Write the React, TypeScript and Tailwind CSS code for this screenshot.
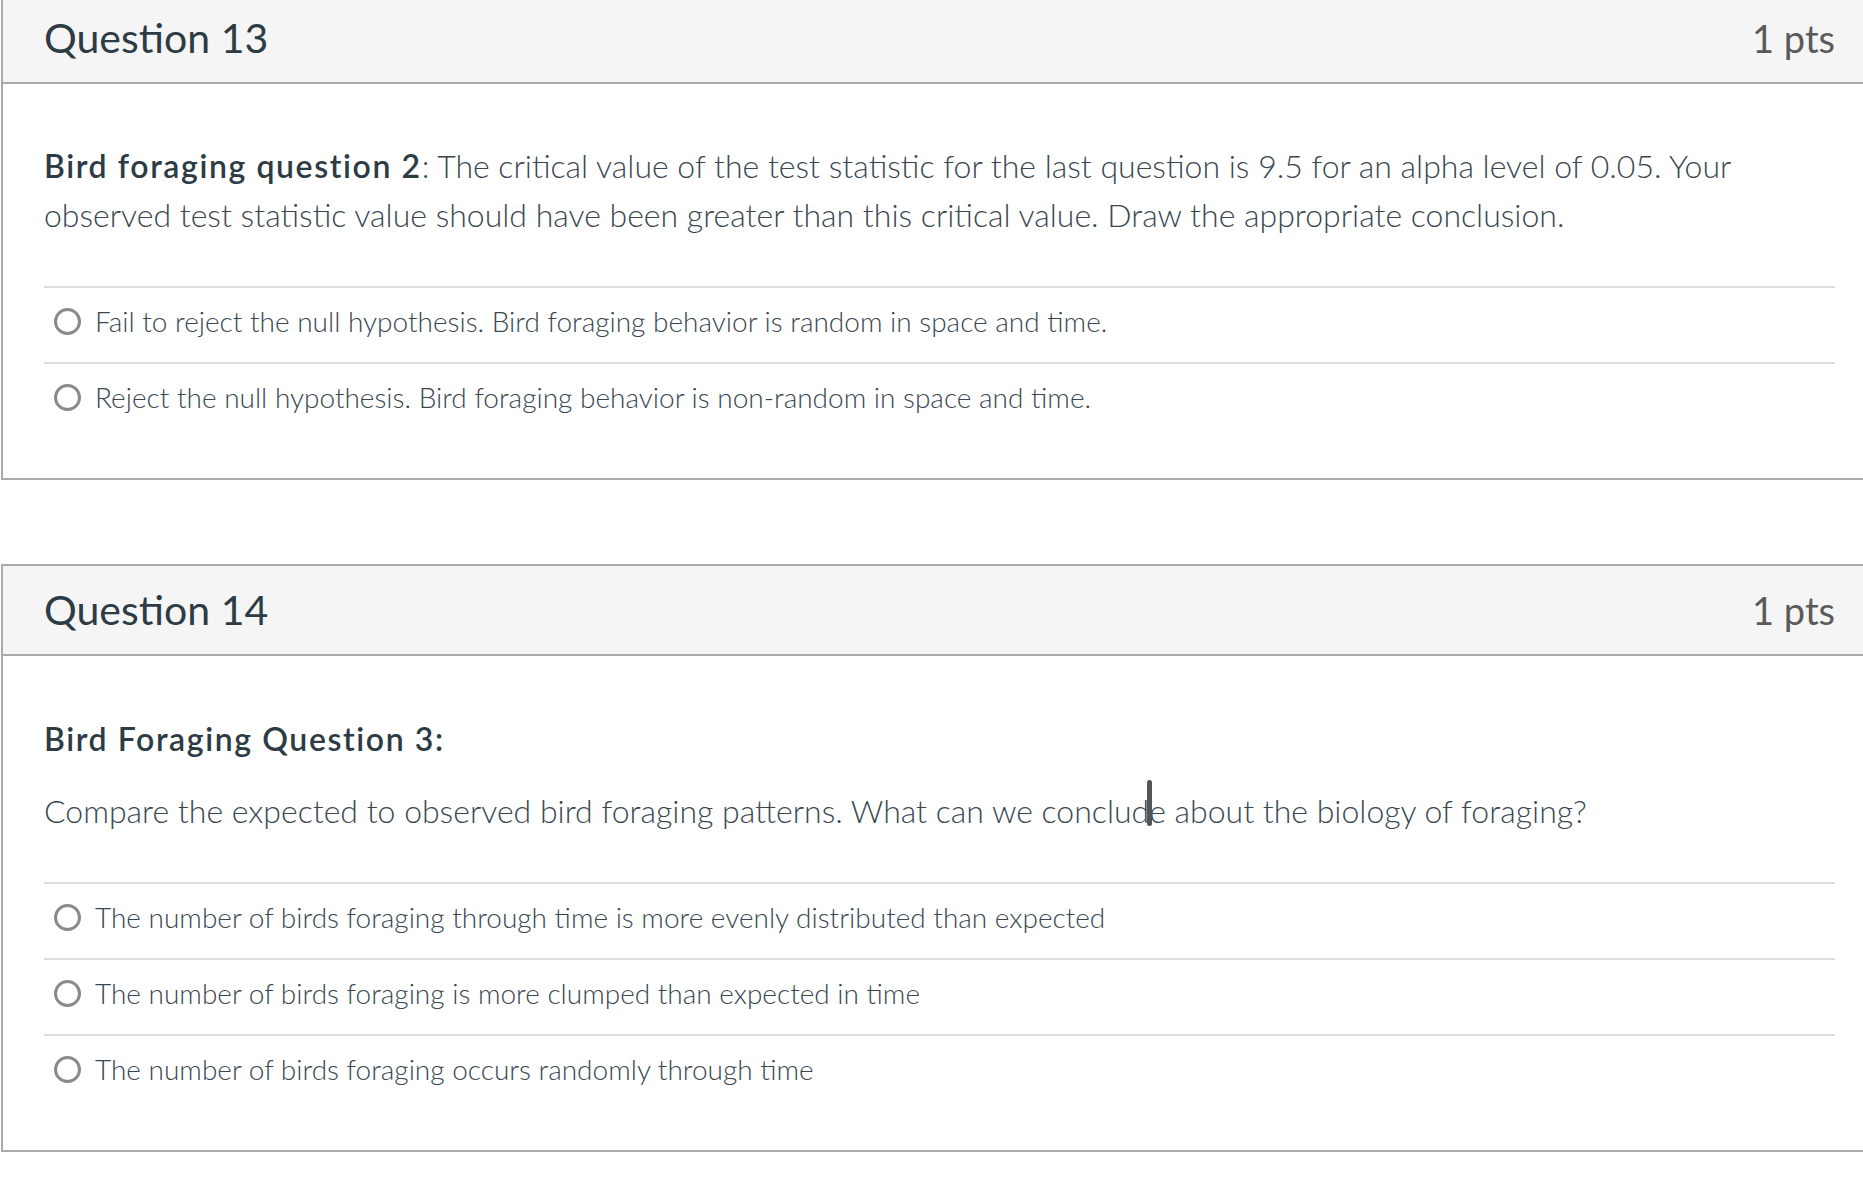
import React from "react";

type Answer = { id: string; text: string };

function Radio() {
  return <span className="ml-[10px] mr-[14px] inline-block h-[27px] w-[27px] shrink-0 rounded-full border-[3px] border-[#8a8a8a] bg-white" />;
}

function AnswerList({ answers }: { answers: Answer[] }) {
  return (
    <div className="mt-[47px]">
      {answers.map((a) => (
        <label key={a.id} className="flex h-[76px] items-center border-t-2 border-[#dddddd] pb-[8px]">
          <Radio />
          <span className="text-[28px] font-light text-[#3a4751]">{a.text}</span>
        </label>
      ))}
    </div>
  );
}

function QuestionCard({
  title,
  points,
  children,
  className = "",
}: {
  title: string;
  points: string;
  children: React.ReactNode;
  className?: string;
}) {
  return (
    <div className={`ml-px w-[1880px] border-2 border-[#aaaaaa] bg-white ${className}`}>
      <div className="flex h-[90px] items-center justify-between border-b-2 border-[#aaaaaa] bg-[#f5f5f5] pl-[41px] pr-[44px]">
        <h2 className="text-[41px] text-[#2d3b45]">{title}</h2>
        <span className="text-[38px] text-[#5a5a5a]">{points}</span>
      </div>
      <div className="pl-[41px] pr-[44px] pb-[40px]">{children}</div>
    </div>
  );
}

export default function App() {
  return (
    <div
      className="relative h-[1185px] w-full overflow-hidden bg-white"
      style={{ fontFamily: "Lato, 'Lato Extended', 'Open Sans', sans-serif" }}
    >
      <div className="-mt-[8px]">
        <QuestionCard title="Question 13" points="1 pts">
          <p className="pt-[57px] text-[32px] font-light leading-[49px] text-[#3a4751]">
            <strong className="font-semibold tracking-[0.05em] text-[#2d3b45]">Bird foraging question 2</strong>: The critical
            value of the test statistic for the last question is 9.5 for an alpha level of 0.05. Your observed test statistic
            value should have been greater than this critical value. Draw the appropriate conclusion.
          </p>
          <AnswerList
            answers={[
              { id: "a1", text: "Fail to reject the null hypothesis. Bird foraging behavior is random in space and time." },
              { id: "a2", text: "Reject the null hypothesis. Bird foraging behavior is non-random in space and time." },
            ]}
          />
        </QuestionCard>

        <QuestionCard title="Question 14" points="1 pts" className="mt-[84px]">
          <div className="pt-[58px] text-[32px] font-light leading-[49px] text-[#3a4751]">
            <p>
              <strong className="font-semibold tracking-[0.05em] text-[#2d3b45]">Bird Foraging Question 3:</strong>
            </p>
            <p className="mt-[23px]">
              Compare the expected to observed bird foraging patterns. What can we conclude about the biology of foraging?
            </p>
          </div>
          <AnswerList
            answers={[
              { id: "b1", text: "The number of birds foraging through time is more evenly distributed than expected" },
              { id: "b2", text: "The number of birds foraging is more clumped than expected in time" },
              { id: "b3", text: "The number of birds foraging occurs randomly through time" },
            ]}
          />
        </QuestionCard>
      </div>

      {/* text cursor over "conclude" */}
      <span className="absolute left-[1147px] top-[780px] h-[46px] w-[5px] rounded-full bg-[#555555]" />
    </div>
  );
}
